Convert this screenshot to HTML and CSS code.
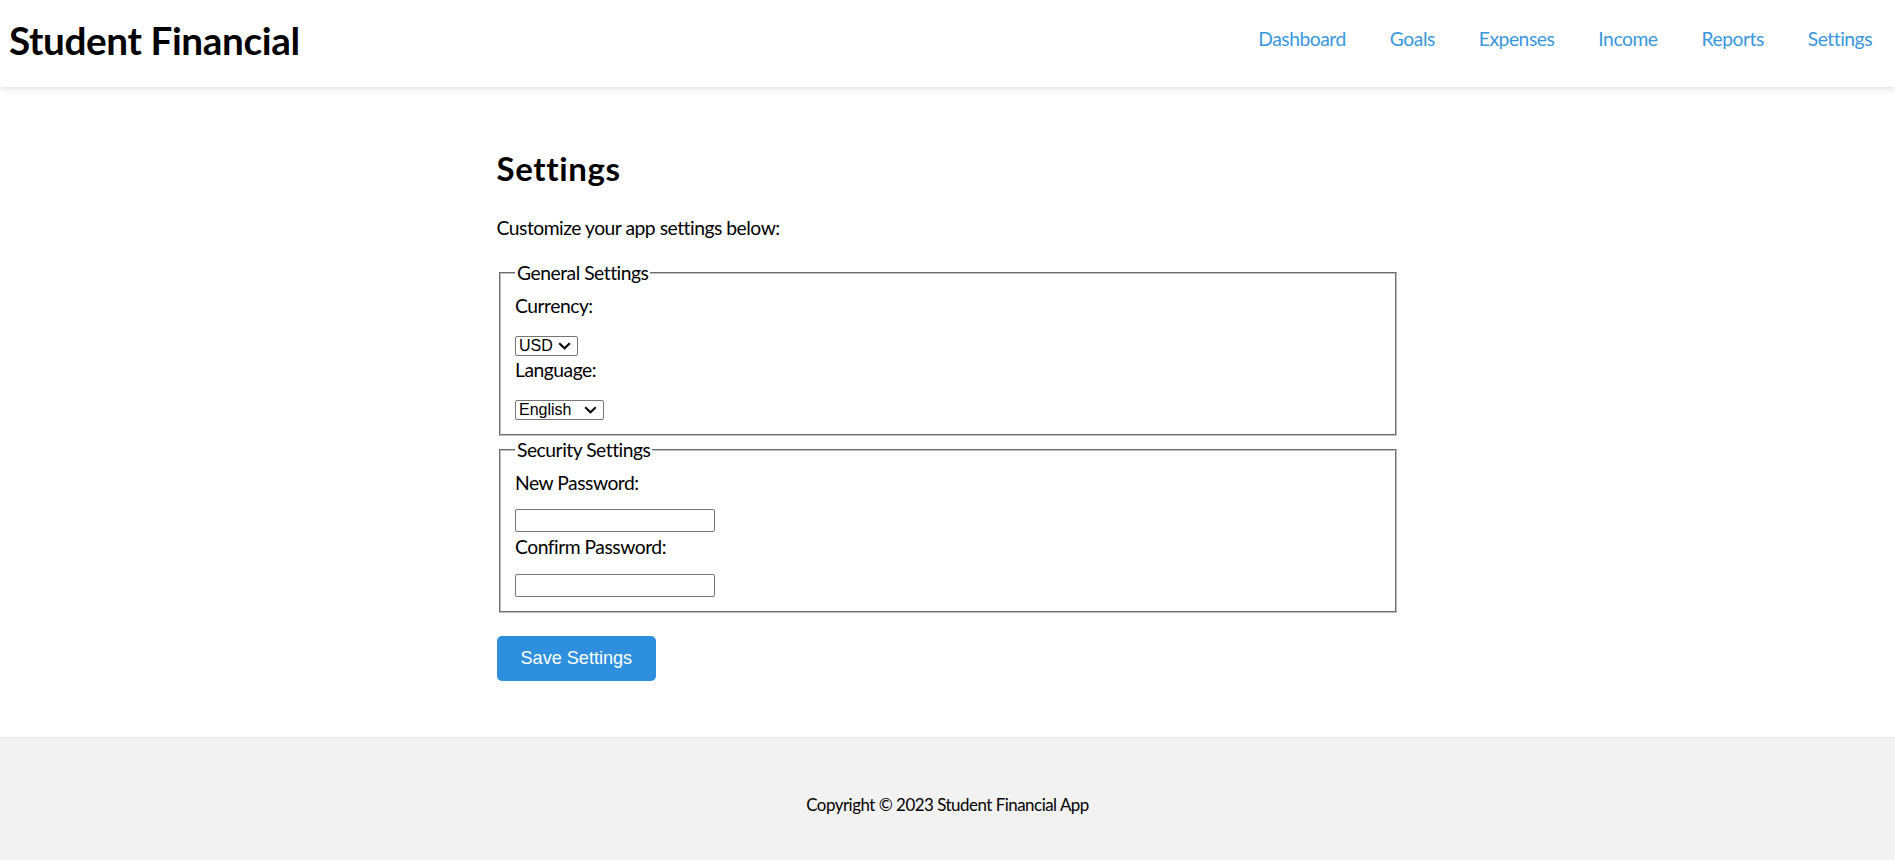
FILE: index.html
```html
<!DOCTYPE html>
<html lang="en">
<head>
<meta charset="utf-8">
<title>Student Financial - Settings</title>
<link rel="stylesheet" href="styles.css">
</head>
<body>
<header class="site-header">
  <h1 class="brand">Student Financial</h1>
  <nav class="main-nav">
    <a href="#">Dashboard</a>
    <a href="#">Goals</a>
    <a href="#">Expenses</a>
    <a href="#">Income</a>
    <a href="#">Reports</a>
    <a href="#">Settings</a>
  </nav>
</header>
<main class="content">
  <h2 class="page-title">Settings</h2>
  <p class="intro">Customize your app settings below:</p>
  <form class="settings-form">
    <fieldset class="group">
      <legend>General Settings</legend>
      <label for="currency" class="lbl lbl-select">Currency:</label>
      <span class="select-wrap">
        <select id="currency" class="field select sel-currency">
          <option>USD</option>
          <option>EUR</option>
          <option>GBP</option>
        </select>
        <svg class="chev" width="13" height="8" viewBox="0 0 13 8" aria-hidden="true"><path d="M1.2 1.2 L6.5 6.3 L11.8 1.2" fill="none" stroke="#000" stroke-width="2"/></svg>
      </span>
      <label for="language" class="lbl lbl-select">Language:</label>
      <span class="select-wrap">
        <select id="language" class="field select sel-language">
          <option>English</option>
          <option>Spanish</option>
          <option>French</option>
        </select>
        <svg class="chev" width="13" height="8" viewBox="0 0 13 8" aria-hidden="true"><path d="M1.2 1.2 L6.5 6.3 L11.8 1.2" fill="none" stroke="#000" stroke-width="2"/></svg>
      </span>
    </fieldset>
    <fieldset class="group">
      <legend>Security Settings</legend>
      <label for="newpw" class="lbl lbl-input">New Password:</label>
      <input id="newpw" type="password" class="field text-input">
      <label for="confirmpw" class="lbl lbl-input">Confirm Password:</label>
      <input id="confirmpw" type="password" class="field text-input">
    </fieldset>
    <button type="button" class="save-btn">Save Settings</button>
  </form>
</main>
<footer class="site-footer">
  <p>Copyright © 2023 Student Financial App</p>
</footer>
</body>
</html>
```
FILE: styles.css
```css
html, body {
  margin: 0;
  padding: 0;
  background: #ffffff;
}

body {
  font-family: Lato, "Open Sans", sans-serif;
  font-size: 19.3px;
  letter-spacing: -0.025em;
  color: #000;
}

.site-header {
  display: flex;
  justify-content: space-between;
  align-items: flex-start;
  height: 87px;
  padding: 0 23px 0 9px;
  background: #fff;
  box-shadow: 0 2px 6px rgba(0, 0, 0, 0.12);
  position: relative;
}

.brand {
  margin: 17px 0 0;
  font-size: 38.7px;
  font-weight: 700;
  line-height: 1.2;
  letter-spacing: -0.01em;
}

.main-nav {
  display: flex;
  gap: 44px;
  margin-top: 26px;
}

.main-nav a {
  color: #3897e0;
  text-decoration: none;
  font-size: 19.3px;
  line-height: 25.7px;
}

.content {
  width: 902px;
  margin: 0 auto;
  padding: 60px 0 56px;
}

.page-title {
  margin: 0 0 24.5px;
  font-size: 33px;
  font-weight: 700;
  line-height: 1.33;
  letter-spacing: 0.02em;
}

.intro {
  margin: 0 0 19px;
  line-height: 25.7px;
}

.group {
  margin: 0 2px 0.6px;
  padding: 7px 14.5px 12.5px;
  border: 2px groove #c0c0c0;
}

.group + .group {
  margin-bottom: 0;
}

.group legend {
  padding: 0 2px;
  line-height: 25.7px;
}

.lbl {
  display: block;
  line-height: 25.7px;
}

.lbl-select {
  margin-bottom: 17.1px;
}

.lbl-input {
  margin-bottom: 14.1px;
}

.field {
  box-sizing: border-box;
  margin: 0;
  border: 1px solid #767676;
  border-radius: 2px;
  background: #fff;
  font-family: "Liberation Sans", Arial, sans-serif;
  font-size: 16px;
  letter-spacing: 0;
  color: #000;
}

.select-wrap {
  display: block;
  position: relative;
  width: fit-content;
  margin-bottom: 1.7px;
}

.select {
  display: block;
  -webkit-appearance: none;
  appearance: none;
  height: 20px;
  padding: 0 0 0 3px;
  line-height: 18px;
}

.chev {
  position: absolute;
  right: 7px;
  top: 6px;
  pointer-events: none;
}

.sel-currency {
  width: 63px;
}

.sel-language {
  width: 89px;
}

.text-input {
  display: block;
  width: 200px;
  height: 23px;
  margin-bottom: 1.7px;
}

.save-btn {
  display: block;
  margin-top: 23px;
  padding: 12px 24px;
  border: 0;
  border-radius: 5px;
  background: #2e8fde;
  color: #fff;
  font-family: "Liberation Sans", Arial, sans-serif;
  font-size: 18.1px;
  letter-spacing: 0;
  line-height: 1.15;
  cursor: pointer;
}

.site-footer {
  background: #f2f2f2;
  border-top: 1px solid #e6e6e6;
  padding: 56px 0 44px;
  text-align: center;
}

.site-footer p {
  margin: 0;
  font-size: 16.9px;
  line-height: 22.5px;
}
```
